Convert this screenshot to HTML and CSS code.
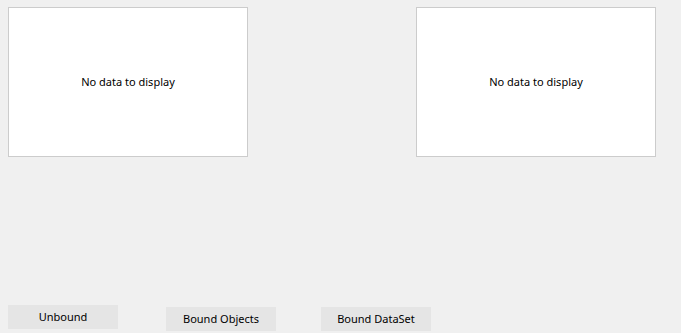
FILE: index.html
```html
<!DOCTYPE html>
<html>
<head>
<meta charset="utf-8">
<link rel="stylesheet" href="styles.css">
</head>
<body>
<div class="form">
  <div class="charts">
    <div class="chart"><span class="empty">No data to display</span></div>
    <div class="chart"><span class="empty">No data to display</span></div>
  </div>
  <div class="buttons">
    <div class="btn btn-unbound">Unbound</div>
    <div class="btn btn-objects">Bound Objects</div>
    <div class="btn btn-dataset">Bound DataSet</div>
  </div>
</div>
</body>
</html>
```
FILE: styles.css
```css
html, body {
  margin: 0;
  padding: 0;
  background: #f0f0f0;
}
.form {
  width: 681px;
  height: 333px;
  display: flex;
  flex-direction: column;
  justify-content: space-between;
  font-family: "Noto Sans", "Open Sans", sans-serif;
  font-size: 11px;
  color: #000;
}
.charts {
  display: flex;
  gap: 168px;
  padding: 7px 0 0 8px;
}
.chart {
  width: 238px;
  height: 146px;
  padding-bottom: 2px;
  background: #fff;
  border: 1px solid #cccccc;
  display: flex;
  align-items: center;
  justify-content: center;
}
.buttons {
  display: flex;
  align-items: flex-start;
  padding: 0 0 2px 8px;
}
.btn {
  width: 110px;
  height: 22px;
  padding-bottom: 2px;
  background: #e5e5e5;
  display: flex;
  align-items: center;
  justify-content: center;
}
.btn-objects {
  margin-left: 48px;
  margin-top: 2px;
}
.btn-dataset {
  margin-left: 45px;
  margin-top: 2px;
}
```
